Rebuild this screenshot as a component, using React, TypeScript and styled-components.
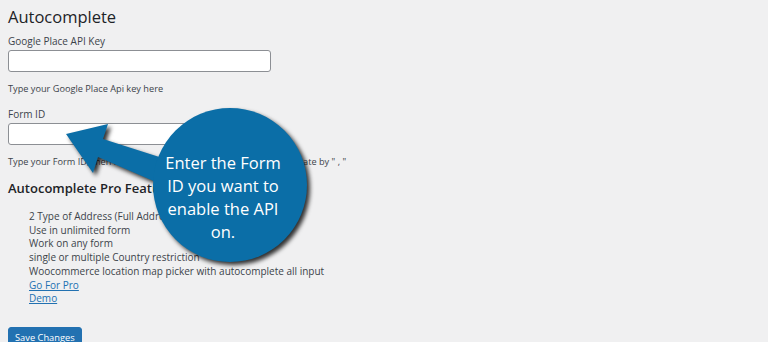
import React from "react";
import styled, { createGlobalStyle } from "styled-components";

const Global = createGlobalStyle`
  html, body { margin: 0; padding: 0; background: #f0f0f1; }
  body { font-family: "Open Sans", "Noto Sans", sans-serif; color: #3c434a; }
  * { box-sizing: border-box; }
`;

const Page = styled.div`
  position: relative;
  width: 768px;
  height: 342px;
  overflow: hidden;
  padding: 6px 8px 0 8px;
`;

const Title = styled.h1`
  margin: 0;
  font-size: 16.5px;
  font-weight: 400;
  line-height: 22px;
  color: #1d2327;
`;

const Field = styled.div<{ $top: number }>`
  display: flex;
  flex-direction: column;
  margin-top: ${(p) => p.$top}px;
`;

const Label = styled.label`
  font-size: 10px;
  line-height: 14px;
  color: #3c434a;
`;

const Input = styled.div`
  width: 263px;
  height: 22px;
  margin-top: 2px;
  background: #fff;
  border: 1px solid #8c8f94;
  border-radius: 3px;
`;

const Help = styled.p<{ $top: number }>`
  margin: ${(p) => p.$top}px 0 0 0;
  font-size: 9.2px;
  line-height: 14px;
  color: #3c434a;
  white-space: nowrap;
`;

const SubTitle = styled.h2`
  margin: 10px 0 0 0;
  font-size: 13px;
  font-weight: 600;
  line-height: 18px;
  color: #1d2327;
`;

const List = styled.ul`
  list-style: none;
  margin: 13px 0 0 0;
  padding: 0 0 0 21px;
  display: flex;
  flex-direction: column;
`;

const Item = styled.li`
  font-size: 10px;
  line-height: 13.7px;
  color: #3c434a;
`;

const Link = styled.a`
  color: #2271b1;
  text-decoration: underline;
`;

const Button = styled.button`
  margin-top: 21px;
  height: 22px;
  padding: 0 6px;
  background: #2271b1;
  border: 1px solid #2271b1;
  border-radius: 3px;
  color: #fff;
  font-family: inherit;
  font-size: 9.3px;
  line-height: 20px;
`;

const Callout = styled.div`
  position: absolute;
  left: 0;
  top: 0;
  width: 768px;
  height: 342px;
  pointer-events: none;
`;

const CalloutArt = styled.svg`
  position: absolute;
  left: 0;
  top: 0;
  filter: drop-shadow(3px 3px 2px rgba(0, 0, 0, 0.8));
`;

const BubbleText = styled.div`
  position: absolute;
  left: 146px;
  top: 108px;
  width: 154px;
  height: 154px;
  display: flex;
  align-items: center;
  justify-content: center;
  text-align: center;
  padding: 24px 0 0 0;
  color: #fff;
  font-family: "Open Sans", sans-serif;
  font-size: 16.5px;
  line-height: 23px;
`;

export default function App() {
  return (
    <>
      <Global />
      <Page>
        <Title>Autocomplete</Title>
        <Field $top={6}>
          <Label>Google Place API Key</Label>
          <Input />
        </Field>
        <Help $top={10}>Type your Google Place Api key here</Help>
        <Field $top={11}>
          <Label>Form ID</Label>
          <Input />
        </Field>
        <Help $top={10}>Type your Form ID, then if there are multiple form IDs you could seprate by " , "</Help>
        <SubTitle>Autocomplete Pro Features</SubTitle>
        <List>
          <Item>2 Type of Address (Full Address and Component)</Item>
          <Item>Use in unlimited form</Item>
          <Item>Work on any form</Item>
          <Item>single or multiple Country restriction</Item>
          <Item>Woocommerce location map picker with autocomplete all input</Item>
          <Item><Link href="#">Go For Pro</Link></Item>
          <Item><Link href="#">Demo</Link></Item>
        </List>
        <Button>Save Changes</Button>
        <Callout>
          <CalloutArt width="768" height="342" viewBox="0 0 768 342">
            <polygon
              fill="#0b6ea7"
              points="66,134 108,124 103,139 175,162 165,186 98,157 93,173"
            />
            <circle cx="230" cy="185" r="77" fill="#0b6ea7" />
          </CalloutArt>
          <BubbleText>
            Enter the Form
            <br />
            ID you want to
            <br />
            enable the API
            <br />
            on.
          </BubbleText>
        </Callout>
      </Page>
    </>
  );
}
